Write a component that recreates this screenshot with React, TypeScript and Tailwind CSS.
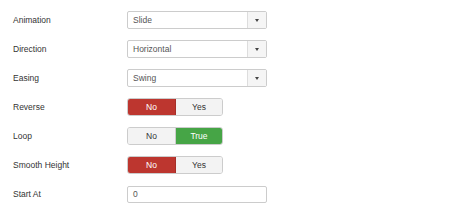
const font = { fontFamily: '"Liberation Sans", Arial, sans-serif' };

function Row({ label, children }: { label: string; children: React.ReactNode }) {
  return (
    <div className="flex items-center h-[18px]">
      <div className="w-[127px] shrink-0 pl-[13px] text-[8.5px] text-[#333]">{label}</div>
      {children}
    </div>
  );
}

function Select({ value }: { value: string }) {
  return (
    <div className="flex w-[140px] h-[18px] border border-[#ccc] rounded-[2px] bg-white">
      <div className="flex-1 flex items-center pl-[5px] text-[8.5px] text-[#555]">{value}</div>
      <div className="w-[19px] border-l border-[#ddd] bg-[#f5f5f5] flex items-center justify-center">
        <div className="w-0 h-0 border-l-[2.5px] border-r-[2.5px] border-t-[3px] border-l-transparent border-r-transparent border-t-[#444]" />
      </div>
    </div>
  );
}

function Toggle({ left, right, active }: { left: string; right: string; active: "red" | "green" }) {
  const on = active === "red";
  return (
    <div className="flex w-[96px] h-[18px] rounded-[3px] overflow-hidden border border-[#ccc] text-[8.5px]">
      <div
        className={
          on
            ? "w-[48px] flex items-center justify-center bg-[#bd362f] text-white border-r border-[#a52f29]"
            : "w-[48px] flex items-center justify-center bg-[#f3f3f3] text-[#333] border-r border-[#ccc]"
        }
      >
        {left}
      </div>
      <div
        className={
          on
            ? "flex-1 flex items-center justify-center bg-[#f3f3f3] text-[#333]"
            : "flex-1 flex items-center justify-center bg-[#46a546] text-white"
        }
      >
        {right}
      </div>
    </div>
  );
}

export default function App() {
  return (
    <div className="w-[474px] h-[212px] bg-white pt-[11px] flex flex-col gap-[11px]" style={font}>
      <Row label="Animation">
        <Select value="Slide" />
      </Row>
      <Row label="Direction">
        <Select value="Horizontal" />
      </Row>
      <Row label="Easing">
        <Select value="Swing" />
      </Row>
      <Row label="Reverse">
        <Toggle left="No" right="Yes" active="red" />
      </Row>
      <Row label="Loop">
        <Toggle left="No" right="True" active="green" />
      </Row>
      <Row label="Smooth Height">
        <Toggle left="No" right="Yes" active="red" />
      </Row>
      <div className="flex items-center h-[17px] mt-[1px]">
        <div className="w-[127px] shrink-0 pl-[13px] text-[8.5px] text-[#333]">Start At</div>
        <div className="flex items-center w-[140px] h-[17px] border border-[#ccc] rounded-[2px] pl-[5px] text-[8.5px] text-[#555]">
          0
        </div>
      </div>
    </div>
  );
}
